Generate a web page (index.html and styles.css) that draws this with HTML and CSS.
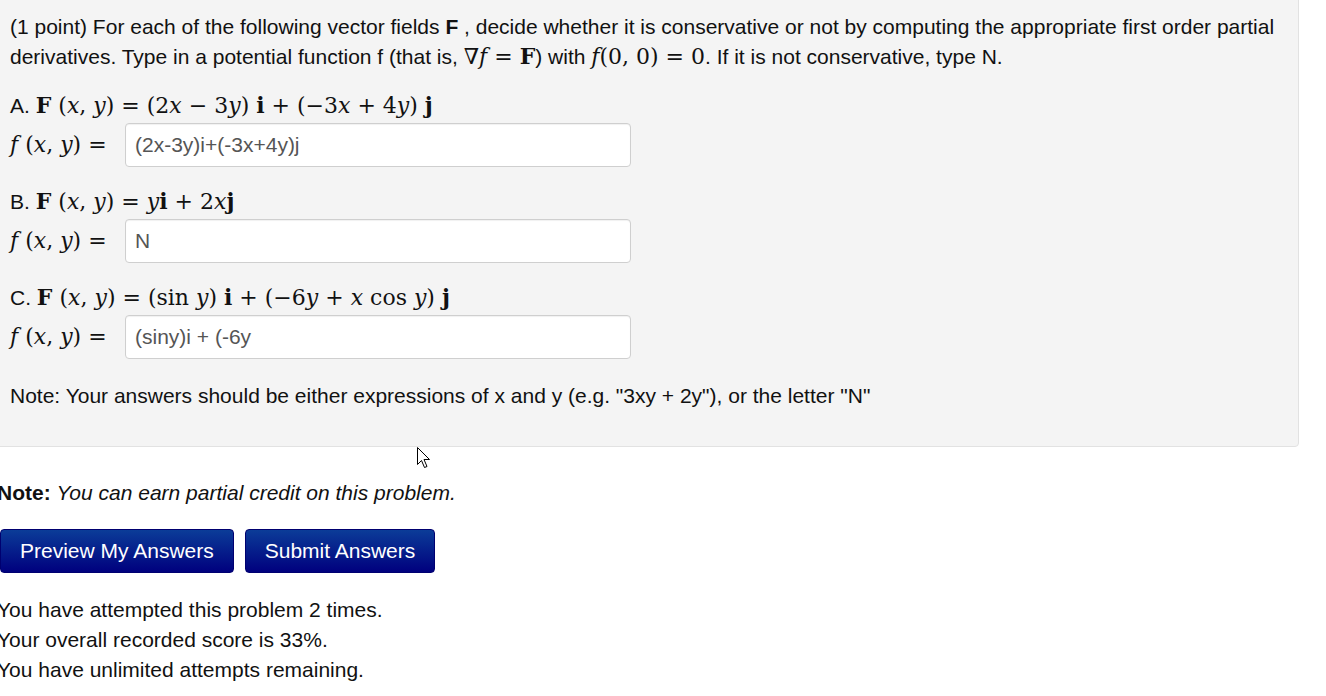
FILE: index.html
```html
<!DOCTYPE html>
<html>
<head>
<meta charset="utf-8">
<link rel="stylesheet" href="styles.css">
</head>
<body>
<div class="page">
  <div class="problem">
    <p class="intro">(1 point) For each of the following vector fields <b>F</b> , decide whether it is conservative or not by computing the appropriate first order partial derivatives. Type in a potential function f (that is, <span class="m">∇<i>f</i> = <b>F</b></span>) with <span class="m"><i>f</i>(0, 0) = 0</span>. If it is not conservative, type N.</p>

    <div class="item first">
      <div class="field">A. <span class="m"><b>F</b> (<i>x</i>, <i>y</i>) = (2<i>x</i> − 3<i>y</i>) <b>i</b> + (−3<i>x</i> + 4<i>y</i>) <b>j</b></span></div>
      <div class="row">
        <span class="flabel m"><i>f</i> (<i>x</i>, <i>y</i>) =</span>
        <input class="answer" type="text" value="(2x-3y)i+(-3x+4y)j">
      </div>
    </div>

    <div class="item">
      <div class="field">B. <span class="m"><b>F</b> (<i>x</i>, <i>y</i>) = <i>y</i><b>i</b> + 2<i>x</i><b>j</b></span></div>
      <div class="row">
        <span class="flabel m"><i>f</i> (<i>x</i>, <i>y</i>) =</span>
        <input class="answer" type="text" value="N">
      </div>
    </div>

    <div class="item">
      <div class="field">C. <span class="m"><b>F</b> (<i>x</i>, <i>y</i>) = (sin <i>y</i>) <b>i</b> + (−6<i>y</i> + <i>x</i> cos <i>y</i>) <b>j</b></span></div>
      <div class="row">
        <span class="flabel m"><i>f</i> (<i>x</i>, <i>y</i>) =</span>
        <input class="answer" type="text" value="(siny)i + (-6y">
      </div>
    </div>

    <p class="note">Note: Your answers should be either expressions of x and y (e.g. "3xy + 2y"), or the letter "N"</p>
  </div>

  <p class="credit"><b>Note:</b> <i>You can earn partial credit on this problem.</i></p>

  <div class="buttons">
    <button class="btn">Preview My Answers</button>
    <button class="btn">Submit Answers</button>
  </div>

  <div class="status">
    <p>You have attempted this problem 2 times.</p>
    <p>Your overall recorded score is 33%.</p>
    <p>You have unlimited attempts remaining.</p>
  </div>
</div>

<svg class="cursor" width="14" height="23" viewBox="0 0 14 23">
  <path d="M0.5 0.5 L0.5 17.5 L4.5 13.5 L7.5 20.5 L10 19.5 L7 12.5 L12.5 12.5 Z" fill="#fff" stroke="#000" stroke-width="1" stroke-linejoin="miter"/>
</svg>
</body>
</html>
```

FILE: styles.css
```css
html, body {
  margin: 0;
  padding: 0;
  background: #fff;
}

body {
  font-family: "Liberation Sans", Arial, sans-serif;
  font-size: 21px;
  color: #111;
  overflow: hidden;
}

.page {
  margin-left: -3px;
}

.problem {
  background: #f4f4f4;
  border: 1px solid #e2e2e2;
  border-radius: 4px;
  margin-left: -6px;
  margin-top: -10px;
  width: 1277px;
  padding: 21px 11px 35px 18px;
}

p {
  margin: 0;
  line-height: 30px;
}

.intro .m {
  line-height: 1;
}

.m {
  font-family: "DejaVu Serif", "Liberation Serif", serif;
  font-size: 22px;
}

.m i {
  font-style: italic;
}

.m b {
  font-weight: bold;
}

.item {
  margin-top: 19px;
}

.item.first {
  margin-top: 18px;
}

.field {
  height: 32px;
  line-height: 32px;
}

.field .m {
  line-height: 1;
}

.row {
  display: flex;
  align-items: center;
  height: 44px;
  margin-top: 1px;
}

.flabel {
  width: 115px;
  flex: none;
  white-space: nowrap;
  line-height: 1;
}

.answer {
  width: 506px;
  height: 44px;
  box-sizing: border-box;
  border: 1px solid #cfcfcf;
  border-radius: 4px;
  background: #fff;
  padding: 0 9px;
  font-family: "Liberation Sans", Arial, sans-serif;
  font-size: 21px;
  color: #555;
  box-shadow: inset 0 1px 1px rgba(0, 0, 0, 0.06);
  margin: 0;
}

.note {
  margin-top: 22px;
}

.credit {
  margin-top: 31px;
}

.buttons {
  display: flex;
  gap: 11px;
  margin-top: 21px;
  margin-left: 3px;
}

.btn {
  height: 44px;
  padding: 0 19px;
  border: 1px solid #000070;
  border-radius: 4px;
  background: linear-gradient(to bottom, #0b3c98, #00007e);
  color: #fff;
  font-family: "Liberation Sans", Arial, sans-serif;
  font-size: 21px;
  margin: 0;
}

.status {
  margin-top: 22px;
}

.cursor {
  position: absolute;
  left: 417px;
  top: 447px;
}
```
